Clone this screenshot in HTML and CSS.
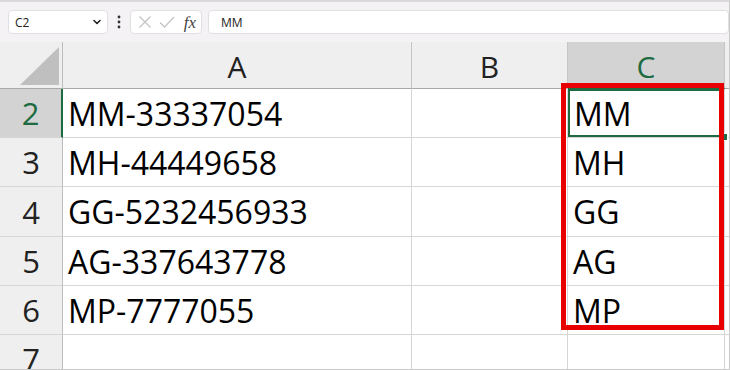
FILE: index.html
```html
<!DOCTYPE html>
<html lang="en">
<head>
  <meta charset="UTF-8">
  <title>Split text - Excel</title>
  <link rel="stylesheet" href="styles.css">
</head>
<body>

<div class="frame">
  <div class="toolbar">
    <div class="namebox">
      <span>C2</span>
      <svg class="chevron" width="8" height="6" viewBox="0 0 8 6"><path d="M1 1.5 L4 4.5 L7 1.5" fill="none" stroke="#222" stroke-width="1.6" stroke-linecap="round" stroke-linejoin="round"/></svg>
    </div>
    <div class="grip">
      <svg width="4" height="14" viewBox="0 0 4 14"><circle cx="2" cy="2" r="1.4" fill="#333"/><circle cx="2" cy="7" r="1.4" fill="#333"/><circle cx="2" cy="12" r="1.4" fill="#333"/></svg>
    </div>
    <div class="funcs">
      <svg width="14" height="14" viewBox="0 0 14 14"><path d="M1.5 1.5 L12.5 12.5 M12.5 1.5 L1.5 12.5" stroke="#c4c4c4" stroke-width="1.3" fill="none"/></svg>
      <svg width="16" height="14" viewBox="0 0 16 14"><path d="M1 7.5 L5.5 12 L15 2" stroke="#c4c4c4" stroke-width="1.3" fill="none"/></svg>
      <span class="fx">fx</span>
    </div>
    <div class="formula">MM</div>
  </div>

  <div class="sheet">
    <div class="corner">
      <svg width="62" height="46" viewBox="0 0 62 46"><polygon points="20,43 59,5 59,43" fill="#bfbfbf"/></svg>
    </div>
    <div class="col">A</div>
    <div class="col">B</div>
    <div class="col selected">C</div>
    <div class="col"></div>

    <div class="row selected">2</div>
    <div class="cell">MM-33337054</div>
    <div class="cell"></div>
    <div class="cell active">MM</div>
    <div class="cell"></div>

    <div class="row">3</div>
    <div class="cell">MH-44449658</div>
    <div class="cell"></div>
    <div class="cell">MH</div>
    <div class="cell"></div>

    <div class="row">4</div>
    <div class="cell">GG-5232456933</div>
    <div class="cell"></div>
    <div class="cell">GG</div>
    <div class="cell"></div>

    <div class="row">5</div>
    <div class="cell">AG-337643778</div>
    <div class="cell"></div>
    <div class="cell">AG</div>
    <div class="cell"></div>

    <div class="row">6</div>
    <div class="cell">MP-7777055</div>
    <div class="cell"></div>
    <div class="cell">MP</div>
    <div class="cell"></div>

    <div class="row">7</div>
    <div class="cell"></div>
    <div class="cell"></div>
    <div class="cell"></div>
    <div class="cell"></div>
  </div>

  <div class="highlight"></div>
</div>

</body>
</html>
```

FILE: styles.css
```css
:root {
  --toolbarBg: #f4f2f4;
  --headerBg: #f0efef;
  --selectedBg: #d3d3d3;
  --grid: #d6d6d6;
  --green: #1e6b41;
  --red: #e80000;
}

* {
  box-sizing: border-box;
}

html, body {
  margin: 0;
  height: 100%;
}

body {
  background: #fff;
  font-family: "Open Sans", "Noto Sans", sans-serif;
  overflow: hidden;
}

.frame {
  position: relative;
  width: 730px;
  height: 370px;
  display: flex;
  flex-direction: column;
  background: var(--toolbarBg);
  border-top: 2px solid #dcd9dc;
  border-right: 1px solid #c9c9c9;
  border-bottom: 1px solid #c9c9c9;
}

/* formula bar */
.toolbar {
  display: flex;
  align-items: center;
  height: 40px;
  padding: 8px 0 8px 8px;
  font-size: 12px;
  color: #222;
}

.namebox,
.funcs,
.formula {
  height: 24px;
  background: #fff;
  border: 1px solid #e2dfe2;
  border-radius: 4px;
  display: flex;
  align-items: center;
}

.namebox {
  width: 100px;
  padding: 0 6px 0 6px;
  justify-content: space-between;
}

.grip {
  width: 22px;
  display: flex;
  justify-content: center;
}

.funcs {
  width: 72px;
  padding: 0 5px 0 7px;
  gap: 7px;
}

.fx {
  margin-left: auto;
  font-family: "Liberation Serif", "DejaVu Serif", serif;
  font-style: italic;
  font-size: 17px;
  color: #444;
  line-height: 1;
}

.formula {
  flex: 1;
  margin-left: 6px;
  padding-left: 12px;
}

/* grid */
.sheet {
  flex: 1;
  display: grid;
  grid-template-columns: 63px 349px 156px 157px 1fr;
  grid-template-rows: 47px 49px 49px 50px 49px 49px 49px;
  overflow: hidden;
  background: #fff;
}

.sheet > div {
  border-right: 1px solid var(--grid);
  border-bottom: 1px solid var(--grid);
  display: flex;
  align-items: center;
  white-space: nowrap;
  overflow: hidden;
}

.corner {
  background: var(--headerBg);
  border-right-color: #bdbdbd !important;
  border-bottom-color: #a9a9a9 !important;
  align-items: flex-start !important;
}

.col {
  justify-content: center;
  background: var(--headerBg);
  border-right-color: #c6c6c6 !important;
  border-bottom-color: #a9a9a9 !important;
  font-size: 30px;
  color: #222;
  padding-top: 3px;
}

.row {
  justify-content: center;
  background: var(--headerBg);
  border-right-color: #bdbdbd !important;
  font-size: 31px;
  color: #222;
}

.col.selected,
.row.selected {
  background: var(--selectedBg);
  color: var(--green);
}

.col.selected {
  border-bottom: 2px solid var(--green) !important;
}

.row.selected {
  border-right: 2px solid var(--green) !important;
}

.cell {
  font-size: 32px;
  color: #000;
  padding-left: 5px;
}

.cell.active {
  position: relative;
  overflow: visible !important;
  box-shadow: inset 0 0 0 2px var(--green);
  padding-left: 6px;
}

.cell.active::after {
  content: "";
  position: absolute;
  right: -4px;
  bottom: -4px;
  width: 6px;
  height: 6px;
  background: var(--green);
  border: 1px solid #fff;
}

/* annotation box */
.highlight {
  position: absolute;
  left: 561px;
  top: 81px;
  width: 163px;
  height: 247px;
  border: 5px solid var(--red);
  pointer-events: none;
}
```
